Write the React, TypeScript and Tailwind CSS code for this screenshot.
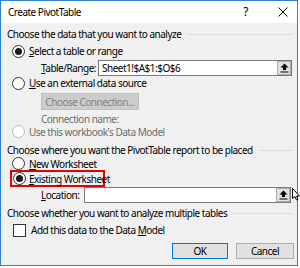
import React from "react";

const font = { fontFamily: '"Noto Sans", "Open Sans", Arial, sans-serif' };

const Radio = ({ checked, disabled }: { checked?: boolean; disabled?: boolean }) => (
  <span
    className={`flex h-[13px] w-[13px] shrink-0 items-center justify-center rounded-full border bg-white ${
      disabled ? "border-[#bcbcbc]" : "border-[#333333]"
    }`}
  >
    {checked && <span className="h-[7px] w-[7px] rounded-full bg-[#1a1a1a]" />}
  </span>
);

const Header = ({ children }: { children: React.ReactNode }) => (
  <div className="flex h-[14px] items-center gap-[6px] pl-[6px] pr-[4px]">
    <span className="whitespace-nowrap">{children}</span>
    <span className="h-px flex-1 bg-[#dcdcdc]" />
  </div>
);

const CollapseIcon = () => (
  <span className="flex h-[14px] w-[14px] shrink-0 items-center justify-center border border-[#adadad] bg-[#e1e1e1]">
    <svg width="9" height="10" viewBox="0 0 9 10">
      <path d="M4.5 0.5 L8.5 4.5 L6 4.5 L6 7 L3 7 L3 4.5 L0.5 4.5 Z" fill="#000" />
      <rect x="0.5" y="8.5" width="8" height="1" fill="#000" />
    </svg>
  </span>
);

export default function App() {
  return (
    <div
      className="relative h-[268px] w-[300px] overflow-hidden whitespace-nowrap bg-white text-[10px] leading-none tracking-[-0.5px] text-black"
      style={font}
    >
      <div className="flex h-[266px] w-[298px] flex-col border border-[#2b7fd2] bg-[#f0f0f0]">
        <div className="flex h-[22px] items-center bg-white pl-[7px]">
          <span className="flex-1">Create PivotTable</span>
          <span className="mr-[30px] text-[12px]">?</span>
          <svg width="10" height="10" viewBox="0 0 10 10" className="mr-[9px]">
            <path d="M0.5 0.5 L9.5 9.5 M9.5 0.5 L0.5 9.5" stroke="#000" strokeWidth="1" />
          </svg>
        </div>

        <div className="mt-[4px]">
          <Header>Choose the data that you want to analyze</Header>
        </div>

        <div className="mt-[3px] flex h-[14px] items-center gap-[4px] pl-[11px]">
          <Radio checked />
          <span>
            <u>S</u>elect a table or range
          </span>
        </div>

        <div className="mt-[2px] flex h-[16px] items-center pl-[40px] pr-[5px]">
          <span className="w-[57px]">
            <u>T</u>able/Range:
          </span>
          <div className="flex h-[16px] flex-1 items-center border border-[#7a7a7a] bg-white pl-[3px]">
            <span className="flex-1">Sheet1!$A$1:$O$6</span>
            <CollapseIcon />
          </div>
        </div>

        <div className="flex h-[14px] items-center gap-[4px] pl-[11px]">
          <Radio />
          <span>
            <u>U</u>se an external data source
          </span>
        </div>

        <div className="mt-[3px] pl-[40px]">
          <div className="flex h-[17px] w-[98px] items-center justify-center border border-[#bfbfbf] bg-[#cccccc] text-[#838383]">
            Choose Connection...
          </div>
        </div>

        <div className="mt-[3px] flex h-[12px] items-center pl-[40px] text-[#6d6d6d]">Connection name:</div>

        <div className="flex h-[13px] items-center gap-[4px] pl-[11px] text-[#6d6d6d]">
          <Radio disabled />
          <span>Use this workbook's Data Model</span>
        </div>

        <div className="mt-[5px]">
          <Header>Choose where you want the PivotTable report to be placed</Header>
        </div>

        <div className="flex h-[13px] items-center gap-[4px] pl-[11px]">
          <Radio />
          <span>
            <u>N</u>ew Worksheet
          </span>
        </div>

        <div className="flex h-[17px] items-center pl-[9px]">
          <div className="flex h-[17px] w-[95px] items-center gap-[3px] border-2 border-[#e60000] pl-[1px]">
            <Radio checked />
            <span>
              <u>E</u>xisting Worksheet
            </span>
          </div>
        </div>

        <div className="flex h-[16px] items-center pl-[40px] pr-[6px]">
          <span className="w-[43px]">
            <u>L</u>ocation:
          </span>
          <div className="flex h-[16px] flex-1 items-center justify-end border border-[#7a7a7a] bg-white">
            <CollapseIcon />
          </div>
        </div>

        <div className="mt-[3px]">
          <Header>Choose whether you want to analyze multiple tables</Header>
        </div>

        <div className="mt-[3px] flex h-[14px] items-center gap-[5px] pl-[12px]">
          <span className="h-[13px] w-[13px] border border-[#333333] bg-white" />
          <span>
            Add this data to the Data <u>M</u>odel
          </span>
        </div>

        <div className="mt-[6px] flex justify-end gap-[8px] pr-[3px]">
          <div className="flex h-[16px] w-[56px] items-center justify-center border border-[#0078d7] bg-[#e1e1e1]">OK</div>
          <div className="flex h-[16px] w-[58px] items-center justify-center border border-[#adadad] bg-[#e1e1e1]">Cancel</div>
        </div>
      </div>

      <svg width="8" height="13" viewBox="0 0 8 13" className="absolute left-[292px] top-[188px]">
        <path d="M0.5 0.5 L0.5 10.5 L3 8.5 L4.5 12 L6 11.3 L4.5 8 L7.5 8 Z" fill="#fff" stroke="#000" strokeWidth="1" />
      </svg>
    </div>
  );
}
